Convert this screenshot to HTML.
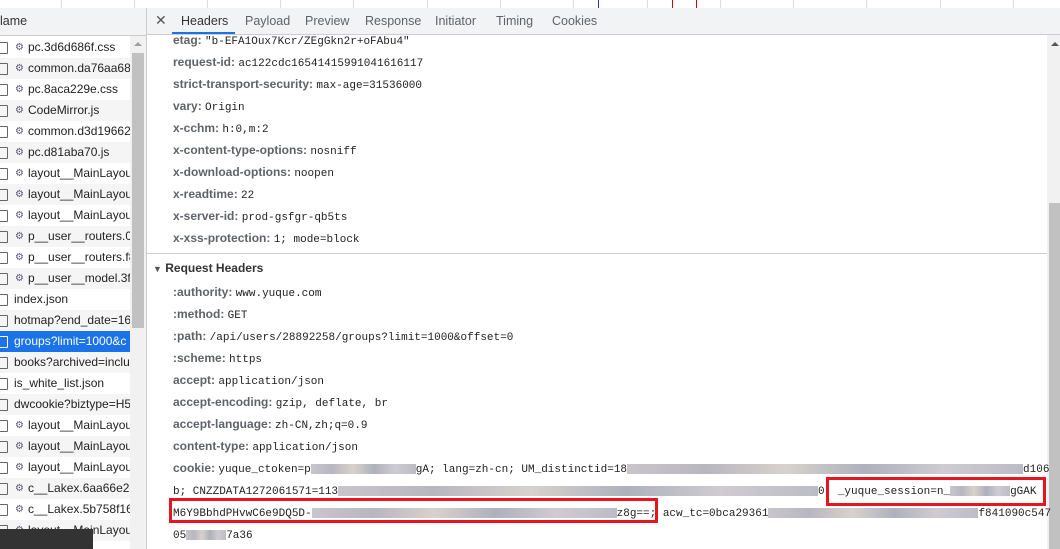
<!DOCTYPE html>
<html><head><meta charset="utf-8"><style>
body{margin:0;width:1060px;height:549px;overflow:hidden;background:#fff;font-family:"Liberation Sans","DejaVu Sans",sans-serif;position:relative}
.abs{position:absolute}
.row{position:absolute;left:0;width:130px;height:21px;font-size:12px;line-height:21px;color:#222;white-space:nowrap;overflow:hidden}
.row.alt{background:#f5f5f5}
.row .cb{position:absolute;left:-3px;top:5px;width:9px;height:10px;border:1px solid #666;border-radius:1px}
.row .g{position:absolute;left:15px;color:#557;font-size:10px}
.row .t{position:absolute;left:28px}
.row .t2{position:absolute;left:14px}
.row.sel{background:#1a73e8;color:#fff}
.row.sel .cb{border-color:#fff}
.h{position:absolute;left:173px;font-size:12px;color:#5f6368;white-space:nowrap}
.h b{font-weight:bold;color:#5f6368}
.h span{font-family:"Liberation Mono",monospace;font-size:11px;color:#222}
.tab{position:absolute;top:14px;font-size:12.5px;color:#5f6368}
.blur{display:inline-block;height:10px;vertical-align:middle;background:linear-gradient(90deg,#c9c5cc,#b8b6c0 20%,#d8d2cc 40%,#aeb1bd 60%,#cfcbd1 80%,#bcbcc6)}
</style></head><body>
<div class="abs" style="left:0;top:0;width:1060px;height:8px;background:#fff;border-bottom:1px solid #ccc"></div>
<div class="abs" style="left:61px;top:0;width:1px;height:8px;background:#ddd"></div>
<div class="abs" style="left:134px;top:0;width:1px;height:8px;background:#ddd"></div>
<div class="abs" style="left:207px;top:0;width:1px;height:8px;background:#ddd"></div>
<div class="abs" style="left:280px;top:0;width:1px;height:8px;background:#ddd"></div>
<div class="abs" style="left:353px;top:0;width:1px;height:8px;background:#ddd"></div>
<div class="abs" style="left:427px;top:0;width:1px;height:8px;background:#ddd"></div>
<div class="abs" style="left:500px;top:0;width:1px;height:8px;background:#ddd"></div>
<div class="abs" style="left:573px;top:0;width:1px;height:8px;background:#ddd"></div>
<div class="abs" style="left:598px;top:0;width:1px;height:8px;background:#2233cc"></div>
<div class="abs" style="left:647px;top:0;width:1px;height:8px;background:#ddd"></div>
<div class="abs" style="left:672px;top:0;width:1px;height:8px;background:#d00"></div>
<div class="abs" style="left:696px;top:0;width:1px;height:8px;background:#d00"></div>
<div class="abs" style="left:720px;top:0;width:1px;height:8px;background:#ddd"></div>
<div class="abs" style="left:793px;top:0;width:1px;height:8px;background:#ddd"></div>
<div class="abs" style="left:866px;top:0;width:1px;height:8px;background:#ddd"></div>
<div class="abs" style="left:940px;top:0;width:1px;height:8px;background:#ddd"></div>
<div class="abs" style="left:1013px;top:0;width:1px;height:8px;background:#ddd"></div>

<div class="abs" style="left:0;top:8px;width:146px;height:27px;background:#f1f3f4;border-bottom:1px solid #ccc;font-size:12.5px;line-height:27px;color:#333">lame</div>
<div class="abs" style="left:146px;top:8px;width:1px;height:541px;background:#ccc"></div>
<div class="abs" style="left:130px;top:36px;width:16px;height:513px;background:#f1f1f1"></div>
<div class="abs" style="left:132px;top:53px;width:12px;height:275px;background:#c1c1c1"></div>
<div class="abs" style="left:134px;top:42px;width:0;height:0;border-left:4px solid transparent;border-right:4px solid transparent;border-bottom:4px solid #a0a0a0"></div>

<div class="row" style="top:37px"><i class="cb"></i><i class="g">⚙</i><span class="t">pc.3d6d686f.css</span></div>
<div class="row alt" style="top:58px"><i class="cb"></i><i class="g">⚙</i><span class="t">common.da76aa68</span></div>
<div class="row" style="top:79px"><i class="cb"></i><i class="g">⚙</i><span class="t">pc.8aca229e.css</span></div>
<div class="row alt" style="top:100px"><i class="cb"></i><i class="g">⚙</i><span class="t">CodeMirror.js</span></div>
<div class="row" style="top:121px"><i class="cb"></i><i class="g">⚙</i><span class="t">common.d3d19662</span></div>
<div class="row alt" style="top:142px"><i class="cb"></i><i class="g">⚙</i><span class="t">pc.d81aba70.js</span></div>
<div class="row" style="top:163px"><i class="cb"></i><i class="g">⚙</i><span class="t">layout__MainLayout</span></div>
<div class="row alt" style="top:184px"><i class="cb"></i><i class="g">⚙</i><span class="t">layout__MainLayout</span></div>
<div class="row" style="top:205px"><i class="cb"></i><i class="g">⚙</i><span class="t">layout__MainLayout</span></div>
<div class="row alt" style="top:226px"><i class="cb"></i><i class="g">⚙</i><span class="t">p__user__routers.09</span></div>
<div class="row" style="top:247px"><i class="cb"></i><i class="g">⚙</i><span class="t">p__user__routers.f8</span></div>
<div class="row alt" style="top:268px"><i class="cb"></i><i class="g">⚙</i><span class="t">p__user__model.3f5</span></div>
<div class="row" style="top:289px"><i class="cb"></i><span class="t2">index.json</span></div>
<div class="row alt" style="top:310px"><i class="cb"></i><span class="t2">hotmap?end_date=16</span></div>
<div class="row sel" style="top:331px"><i class="cb"></i><span class="t2">groups?limit=1000&amp;c</span></div>
<div class="row alt" style="top:352px"><i class="cb"></i><span class="t2">books?archived=inclu</span></div>
<div class="row" style="top:373px"><i class="cb"></i><span class="t2">is_white_list.json</span></div>
<div class="row alt" style="top:394px"><i class="cb"></i><span class="t2">dwcookie?biztype=H5</span></div>
<div class="row" style="top:415px"><i class="cb"></i><i class="g">⚙</i><span class="t">layout__MainLayout</span></div>
<div class="row alt" style="top:436px"><i class="cb"></i><i class="g">⚙</i><span class="t">layout__MainLayout</span></div>
<div class="row" style="top:457px"><i class="cb"></i><i class="g">⚙</i><span class="t">layout__MainLayout</span></div>
<div class="row alt" style="top:478px"><i class="cb"></i><i class="g">⚙</i><span class="t">c__Lakex.6aa66e2c.c</span></div>
<div class="row" style="top:499px"><i class="cb"></i><i class="g">⚙</i><span class="t">c__Lakex.5b758f16..</span></div>
<div class="row alt" style="top:520px"><i class="cb"></i><i class="g">⚙</i><span class="t">layout__MainLayout</span></div>
<div class="abs" style="left:0;top:529px;width:93px;height:20px;background:#333"></div>

<div class="abs" style="left:147px;top:8px;width:913px;height:26px;background:#f1f3f4;border-bottom:1px solid #cbcdd1"></div>
<div class="tab" style="left:155px;top:12px;font-size:14px;color:#555">✕</div>
<div class="tab" style="left:181px;color:#333">Headers</div>
<div class="abs" style="left:172px;top:32px;width:63px;height:2px;background:#1a73e8"></div>
<div class="tab" style="left:245px">Payload</div>
<div class="tab" style="left:305px">Preview</div>
<div class="tab" style="left:365px">Response</div>
<div class="tab" style="left:435px">Initiator</div>
<div class="tab" style="left:496px">Timing</div>
<div class="tab" style="left:552px">Cookies</div>

<div class="abs" style="left:1047px;top:35px;width:13px;height:514px;background:#f1f1f1"></div>
<div class="abs" style="left:1049px;top:203px;width:11px;height:346px;background:#c1c1c1"></div>
<div class="abs" style="left:1051px;top:42px;width:0;height:0;border-left:4px solid transparent;border-right:4px solid transparent;border-bottom:4px solid #555"></div>

<div class="h" style="top:33px"><b>etag:</b> <span>"b-EFA1Oux7Kcr/ZEgGkn2r+oFAbu4"</span></div>
<div class="h" style="top:55px"><b>request-id:</b> <span>ac122cdc16541415991041616117</span></div>
<div class="h" style="top:77px"><b>strict-transport-security:</b> <span>max-age=31536000</span></div>
<div class="h" style="top:99px"><b>vary:</b> <span>Origin</span></div>
<div class="h" style="top:121px"><b>x-cchm:</b> <span>h:0,m:2</span></div>
<div class="h" style="top:143px"><b>x-content-type-options:</b> <span>nosniff</span></div>
<div class="h" style="top:165px"><b>x-download-options:</b> <span>noopen</span></div>
<div class="h" style="top:187px"><b>x-readtime:</b> <span>22</span></div>
<div class="h" style="top:209px"><b>x-server-id:</b> <span>prod-gsfgr-qb5ts</span></div>
<div class="h" style="top:231px"><b>x-xss-protection:</b> <span>1; mode=block</span></div>
<div class="abs" style="left:147px;top:253px;width:900px;height:1px;background:#cacdd1"></div>
<div class="abs" style="left:153px;top:261px;font-size:12px;font-weight:bold;color:#333"><span style="font-size:9px;color:#555">▼</span> Request Headers</div>
<div class="h" style="top:285px"><b>:authority:</b> <span>www.yuque.com</span></div>
<div class="h" style="top:307px"><b>:method:</b> <span>GET</span></div>
<div class="h" style="top:329px"><b>:path:</b> <span>/api/users/28892258/groups?limit=1000&amp;offset=0</span></div>
<div class="h" style="top:351px"><b>:scheme:</b> <span>https</span></div>
<div class="h" style="top:373px"><b>accept:</b> <span>application/json</span></div>
<div class="h" style="top:395px"><b>accept-encoding:</b> <span>gzip, deflate, br</span></div>
<div class="h" style="top:417px"><b>accept-language:</b> <span>zh-CN,zh;q=0.9</span></div>
<div class="h" style="top:439px"><b>content-type:</b> <span>application/json</span></div>
<div class="h" style="top:461px"><b>cookie:</b> <span>yuque_ctoken=p<i class="blur" style="width:105px"></i>gA; lang=zh-cn; UM_distinctid=18<i class="blur" style="width:396px"></i>d106</span></div>
<div class="h" style="top:483px"><span>b; CNZZDATA1272061571=113<i class="blur" style="width:480px"></i>0; _yuque_session=n_<i class="blur" style="width:60px"></i>gGAK</span></div>
<div class="h" style="top:505px"><span>M6Y9BbhdPHvwC6e9DQ5D-<i class="blur" style="width:305px"></i>z8g==; acw_tc=0bca29361<i class="blur" style="width:210px"></i>f841090c547</span></div>
<div class="h" style="top:527px"><span>05<i class="blur" style="width:40px"></i>7a36</span></div>
<div class="abs" style="left:826px;top:477px;width:214px;height:23px;border:3px solid #e8141f"></div>
<div class="abs" style="left:169px;top:498px;width:483px;height:19px;border:3px solid #e8141f"></div>
</body></html>
